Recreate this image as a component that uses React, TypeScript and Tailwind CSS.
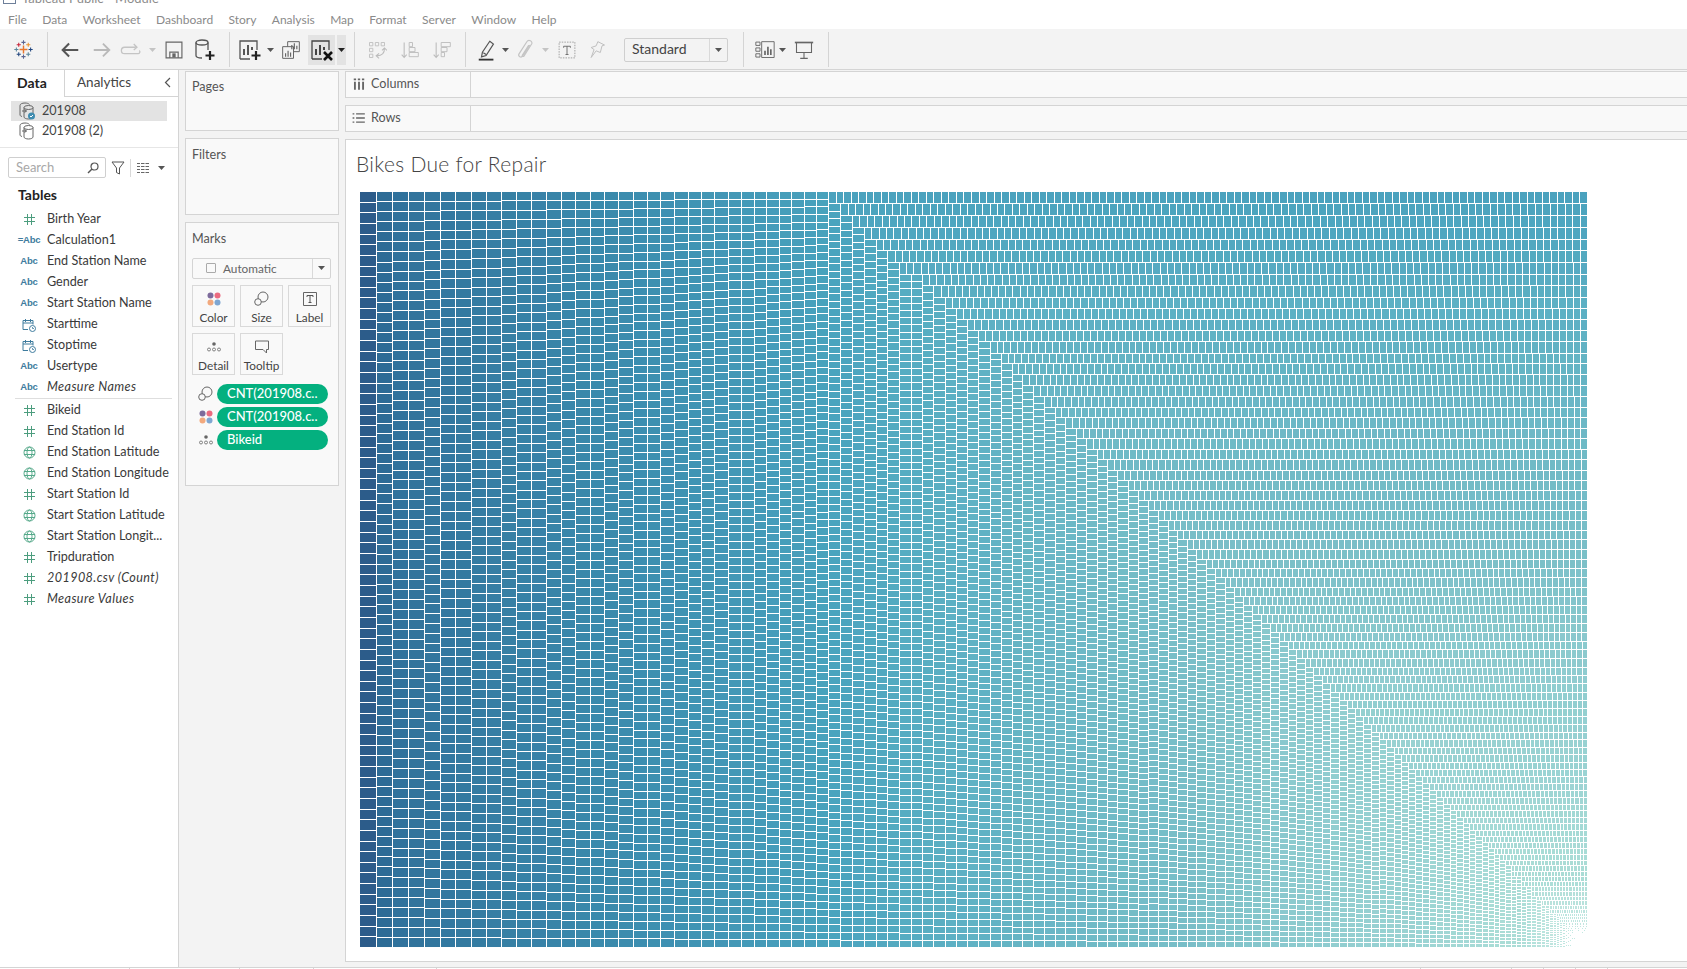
import type { ReactNode } from "react";

// hand drawn toolbar + field icons
const Svg = ({ s = 20, children }: { s?: number; children: ReactNode }) => (
  <svg width={s} height={s} viewBox="0 0 24 24" fill="none" aria-hidden>
    {children}
  </svg>
);

const Caret = ({ c = "#555" }: { c?: string }) => (
  <svg width="7" height="4" viewBox="0 0 7 4" aria-hidden>
    <path d="M0 0h7L3.5 4z" fill={c} />
  </svg>
);

const Logo = () => {
  const crosses: [number, number, number, string, number][] = [
    [12, 12, 5, "#e8762c", 1.8],
    [12, 3, 2.6, "#5b6591", 1.3],
    [12, 21, 2.6, "#5b6591", 1.3],
    [3, 12, 2.6, "#59879b", 1.3],
    [21, 12, 2.6, "#1f447e", 1.3],
    [6, 6, 2.6, "#c72035", 1.3],
    [18, 6, 2.6, "#eb912b", 1.3],
    [6, 18, 2.6, "#1f447e", 1.3],
    [18, 18, 2.6, "#5b879b", 1.3],
  ];
  return (
    <Svg s={19}>
      {crosses.map(([x, y, r, c, sw], i) => (
        <path key={i} d={`M${x - r} ${y}h${r * 2}M${x} ${y - r}v${r * 2}`} stroke={c} strokeWidth={sw} />
      ))}
    </Svg>
  );
};

const IconBack = ({ c = "#555" }: { c?: string }) => (
  <Svg s={22}>
    <path d="M21 12H4M11 5l-7 7 7 7" stroke={c} strokeWidth="2.2" />
  </Svg>
);
const IconFwd = () => (
  <Svg s={22}>
    <path d="M3 12h17M13 5l7 7-7 7" stroke="#b9b9b9" strokeWidth="2" />
  </Svg>
);
const IconRedo = () => (
  <Svg s={22}>
    <path d="M17 9H5a3 3 0 0 0 0 7h15a2 2 0 0 0 1-3.500M15 5.500 18.500 9 15 12" stroke="#c4c4c4" strokeWidth="1.4" />
  </Svg>
);
const IconSave = () => (
  <Svg s={20}>
    <path d="M2.500 2.500h19v19h-19zM7 21.500v-7h10v7" stroke="#666" strokeWidth="1.4" />
    <path d="M10 16h4v5h-4z" fill="#666" />
  </Svg>
);
const IconDb = () => (
  <Svg s={24}>
    <ellipse cx="9" cy="4.500" rx="6" ry="2.500" stroke="#555" strokeWidth="1.3" />
    <path d="M3 4.500v13c0 1.400 2.500 2.500 6 2.500M15 4.500V12" stroke="#555" strokeWidth="1.3" />
    <path d="M17 13v9M12.500 17.500h9" stroke="#222" strokeWidth="2.200" />
  </Svg>
);
const Bars = ({ c = "#555" }: { c?: string }) => (
  <>
    <path d="M2 21V3h17v9M2 21h10" stroke={c} strokeWidth="1.300" />
    <path d="M6 11v6M10 7v10M14 9v3" stroke={c} strokeWidth="2" />
  </>
);
const IconNewWs = () => (
  <Svg s={24}>
    <Bars />
    <path d="M18 13v9M13.500 17.500h9" stroke="#222" strokeWidth="2.200" />
  </Svg>
);
const IconDup = () => (
  <Svg s={20}>
    <path d="M8 8V2h14v12h-7M2 8h13v14H2z" stroke="#666" strokeWidth="1.200" />
    <path d="M5.500 20v-4M8.500 20v-7M11.500 20v-5M13 11V6M16 11V4M19 11V7" stroke="#666" strokeWidth="1.400" />
  </Svg>
);
const IconClear = () => (
  <Svg s={24}>
    <Bars c="#444" />
    <path d="M14 14l8 8M22 14l-8 8" stroke="#111" strokeWidth="2.600" />
  </Svg>
);
const IconSwap = () => (
  <Svg s={20}>
    <path d="M3 3h4v4H3zM10 3h4v4h-4zM17 3h4v4h-4zM3 10h4v4H3zM3 17h4v4H3z" stroke="#c0c0c0" strokeWidth="1.100" />
    <path d="M21 10c0 6-3 9-9 9M14.500 16 11 19l3.500 3M18 12.500l3-3 3 3" stroke="#bcbcbc" strokeWidth="1.300" />
  </Svg>
);
const IconSortAsc = () => (
  <Svg s={20}>
    <path d="M5 3v18M2 17.500 5 21l3-3.500" stroke="#bcbcbc" strokeWidth="1.300" />
    <path d="M11 3h4v5h-4zM11 9h7v5h-7zM11 15h11v5H11z" stroke="#bcbcbc" strokeWidth="1.100" />
  </Svg>
);
const IconSortDesc = () => (
  <Svg s={20}>
    <path d="M5 3v18M2 17.500 5 21l3-3.500" stroke="#bcbcbc" strokeWidth="1.300" />
    <path d="M11 3h11v5H11zM11 9h7v5h-7zM11 15h4v5h-4z" stroke="#bcbcbc" strokeWidth="1.100" />
  </Svg>
);
const IconHighlight = () => (
  <Svg s={22}>
    <path d="M15 2.500l4 3L11 18l-5 1.500L7 14.500z" stroke="#555" strokeWidth="1.300" />
    <path d="M8 15l3 2" stroke="#555" strokeWidth="1.300" />
    <path d="M3 22.500h16" stroke="#333" strokeWidth="2" />
  </Svg>
);
const IconClip = () => (
  <Svg s={22}>
    <path d="M16 6.500 8.500 18.500c-1.800 2.500-5.500.3-4-2.300L13 3c2-3 6.800-.5 5.200 2.500L10 18.500c-.8 1.200-2.500.3-1.800-1L15 7" stroke="#c4c4c4" strokeWidth="1.300" transform="translate(1 0)" />
  </Svg>
);
const IconTextBox = () => (
  <Svg s={18}>
    <path d="M1.500 1.500h21v21h-21z" stroke="#888" strokeWidth="1" strokeDasharray="2 1.500" />
    <path d="M7.500 9V7h9v2M12 7v11M10 18h4" stroke="#666" strokeWidth="1.200" />
  </Svg>
);
const IconPin = () => (
  <Svg s={20}>
    <path d="M13 2l8 4-3 1-2 8-5-2-6 8 3.500-9.500L5 9l6-2z" stroke="#c0c0c0" strokeWidth="1.200" />
  </Svg>
);
const IconShowMe = () => (
  <Svg s={20}>
    <path d="M1 2.500h5v4H1zM1 9.500h5v4H1zM1 16.500h5v4H1zM8 2h15v19H8z" stroke="#666" strokeWidth="1.100" />
    <path d="M12 18v-5M15.500 18V8M19 18v-7" stroke="#666" strokeWidth="2" />
  </Svg>
);
const IconPresent = () => (
  <Svg s={20}>
    <path d="M1 3h22" stroke="#666" strokeWidth="2" />
    <path d="M3 3v12h18V3M12 15v7M7.500 22h9" stroke="#666" strokeWidth="1.300" />
  </Svg>
);
const IconCols = () => (
  <Svg s={14}>
    <path d="M5 8v14M12 8v14M19 8v14" stroke="#666" strokeWidth="3.200" />
    <path d="M3 4h4M10 4h4M17 4h4" stroke="#666" strokeWidth="3" />
  </Svg>
);
const IconRows = () => (
  <Svg s={14}>
    <path d="M7 5h15M7 12h15M7 19h15" stroke="#666" strokeWidth="2.400" />
    <path d="M1 5h3M1 12h3M1 19h3" stroke="#666" strokeWidth="2.400" />
  </Svg>
);
const IconDs = ({ active }: { active?: boolean }) => (
  <svg width="16" height="18" viewBox="0 0 16 18" fill="none" aria-hidden>
    <path d="M3 14.500C1.500 14 1 13.500 1 13V3.500C1 2 3 1 6 1c2 0 3.500.5 4.500 1.500" stroke="#666" strokeWidth="1" />
    <ellipse cx="9.500" cy="5.500" rx="4.500" ry="2" stroke="#666" strokeWidth="1" />
    <path d="M5 5.500V15c0 1 2 2 4.500 2s4.500-1 4.500-2V5.500M3 9h4.500M5.500 7.500 7.500 9l-2 1.500" stroke="#666" strokeWidth="1" />
    {active && <circle cx="12.500" cy="14" r="3.500" fill="#3f8cb0" />}
    {active && <path d="M11 14l1 1 2-2" stroke="#fff" strokeWidth="1" />}
  </svg>
);
const IconSearch = () => (
  <svg width="12" height="12" viewBox="0 0 12 12" fill="none" aria-hidden>
    <circle cx="7.500" cy="4.500" r="3.500" stroke="#555" strokeWidth="1.200" />
    <path d="M5 7 1 11" stroke="#555" strokeWidth="1.500" />
  </svg>
);
const IconFilter = () => (
  <svg width="14" height="14" viewBox="0 0 14 14" fill="none" aria-hidden>
    <path d="M1 1h12L8.500 7v6l-3-1.500V7z" stroke="#555" strokeWidth="1" />
  </svg>
);
const IconList = () => (
  <svg width="12" height="10" viewBox="0 0 12 10" aria-hidden>
    <path d="M0 0h3v1H0zM4 0h3.500v1H4zM8.500 0H12v1H8.500zM0 3h3v1H0zM4 3h3.500v1H4zM8.500 3H12v1H8.500zM0 6h3v1H0zM4 6h3.500v1H4zM8.500 6H12v1H8.500zM0 9h3v1H0zM4 9h3.500v1H4zM8.500 9H12v1H8.500z" fill="#666" />
  </svg>
);
const IconHash = () => (
  <svg width="11" height="11" viewBox="0 0 11 11" fill="none" aria-hidden>
    <path d="M3.500 0v11M7.500 0v11M0 3.500h11M0 7.500h11" stroke="#4c9d7e" strokeWidth="1" />
  </svg>
);
const IconGlobe = () => (
  <svg width="13" height="13" viewBox="0 0 13 13" fill="none" aria-hidden>
    <circle cx="6.500" cy="6.500" r="5.500" stroke="#55a98a" strokeWidth="1" />
    <ellipse cx="6.500" cy="6.500" rx="2.500" ry="5.500" stroke="#55a98a" strokeWidth="1" />
    <path d="M1 4.500h11M1 8.500h11" stroke="#55a98a" strokeWidth="1" />
  </svg>
);
const IconCal = () => (
  <svg width="14" height="14" viewBox="0 0 14 14" fill="none" aria-hidden>
    <path d="M6 11.500H1V2.500h10v4M1 5h10M3.500 1v3M8.500 1v3" stroke="#3f7c9e" strokeWidth="1" />
    <circle cx="10.500" cy="10.500" r="3" stroke="#3f7c9e" strokeWidth="1" />
    <path d="M10.500 9v1.500H12" stroke="#3f7c9e" strokeWidth=".8" />
  </svg>
);
const AbcIcon = ({ calc }: { calc?: boolean }) => (
  <span className="font-['Liberation_Sans',sans-serif] text-[9.5px] font-bold tracking-[-0.2px] text-[#3f7c9e] whitespace-nowrap">
    {calc ? "=Abc" : "Abc"}
  </span>
);
const IconDots = () => (
  <svg width="14" height="14" viewBox="0 0 14 14" aria-hidden>
    <circle cx="3.500" cy="3.500" r="3" fill="#7d6b9c" />
    <circle cx="10.500" cy="3.500" r="3" fill="#ec6b80" />
    <circle cx="3.500" cy="10.500" r="3" fill="#f2a97e" />
    <circle cx="10.500" cy="10.500" r="3" fill="#7fa6d1" />
  </svg>
);
const IconSize = () => (
  <svg width="15" height="15" viewBox="0 0 15 15" fill="none" aria-hidden>
    <circle cx="9" cy="6" r="5" stroke="#666" strokeWidth="1" />
    <circle cx="4" cy="11" r="3.300" stroke="#666" strokeWidth="1" fill="#f9f9f9" />
  </svg>
);
const IconLabel = () => (
  <svg width="14" height="14" viewBox="0 0 14 14" fill="none" aria-hidden>
    <path d="M.5.500h13v13H.5z" stroke="#666" strokeWidth="1" />
    <path d="M4 5V3.500h6V5M7 3.500v7M5.500 10.500h3" stroke="#555" strokeWidth="1" />
  </svg>
);
const IconDetail = () => (
  <svg width="14" height="10" viewBox="0 0 14 10" fill="none" aria-hidden>
    <circle cx="7" cy="2" r="1.800" fill="#666" />
    <circle cx="2" cy="7.500" r="1.500" stroke="#666" strokeWidth=".8" />
    <circle cx="7" cy="7.500" r="1.500" stroke="#666" strokeWidth=".8" />
    <circle cx="12" cy="7.500" r="1.500" stroke="#666" strokeWidth=".8" />
  </svg>
);
const IconTooltip = () => (
  <svg width="14" height="14" viewBox="0 0 14 14" fill="none" aria-hidden>
    <path d="M.5 1h13v8.500h-2V13l-3.500-3.500H.5z" stroke="#666" strokeWidth="1" />
  </svg>
);

// treemap: strips of cells, alternating sides the way a squarified layout does
const STOPS: [number, string][] = [
  [1, "#2b5c8a"],
  [0.98, "#30729b"],
  [0.8, "#3b8bad"],
  [0.614, "#4aa3be"],
  [0.45, "#5bafc3"],
  [0.17, "#7abfc8"],
  [0.033, "#9ad3d3"],
  [0.005, "#abddd7"],
  [0, "#c4e8e2"],
];

const hexAt = (f: number) => {
  for (let i = 0; i < STOPS.length - 1; i++) {
    const [a, ca] = STOPS[i];
    const [b, cb] = STOPS[i + 1];
    if (f <= a && f >= b) {
      const t = (a - f) / (a - b);
      const mix = (o: number) => {
        const p = parseInt(ca.slice(o, o + 2), 16);
        const q = parseInt(cb.slice(o, o + 2), 16);
        return Math.round((p + (q - p) * t) / 2) * 2;
      };
      return `rgb(${mix(1)},${mix(3)},${mix(5)})`;
    }
  }
  return "#c4e8e2";
};

function buildTreemap(W: number, H: number) {
  const paths = new Map<string, string>();
  const add = (x: number, y: number, w: number, h: number, f: number) => {
    const x0 = Math.round(x);
    const y0 = Math.round(y);
    const cw = Math.round(x + w) - x0 - 1;
    const ch = Math.round(y + h) - y0 - 1;
    if (cw < 1 || ch < 1) return;
    const c = hexAt(f);
    paths.set(c, (paths.get(c) ?? "") + `M${x0} ${y0}h${cw}v${ch}h${-cw}z`);
  };
  let x = 0;
  let y = 0;
  let w = W;
  let h = H;
  const A0 = W * H;
  let guard = 0;
  while (w > 1 && h > 1 && guard++ < 3000) {
    const f = (w * h) / A0;
    const side = Math.sqrt(w * h);
    let v = f >= 0.614 ? 90 + (165 - 90) * ((f - 0.614) / 0.386) : 90 * Math.pow(f / 0.614, 0.35);
    if (f === 1) v = 180;
    if (side < 45) v *= side / 45;
    const t0 = Math.sqrt(1.6 * v);
    if (w >= h + (f > 0.5 ? 10 : 0)) {
      const n = Math.max(1, Math.round((h * t0) / v));
      const t = Math.min(w, (n * v) / h);
      for (let i = 0; i < n; i++) add(x, y + (i * h) / n, t, h / n, f);
      x += t;
      w -= t;
    } else {
      const n = Math.max(1, Math.round((w * t0) / v));
      const t = Math.min(h, (n * v) / w);
      for (let i = 0; i < n; i++) add(x + (i * w) / n, y, w / n, t, f);
      y += t;
      h -= t;
    }
  }
  return [...paths.entries()];
}

const TREEMAP = buildTreemap(1228, 756);

type Kind = "abc" | "calc" | "hash" | "globe" | "cal";
const DIMS: [Kind, string, boolean?][] = [
  ["hash", "Birth Year"],
  ["calc", "Calculation1"],
  ["abc", "End Station Name"],
  ["abc", "Gender"],
  ["abc", "Start Station Name"],
  ["cal", "Starttime"],
  ["cal", "Stoptime"],
  ["abc", "Usertype"],
  ["abc", "Measure Names", true],
];
const MEASURES: [Kind, string, boolean?][] = [
  ["hash", "Bikeid"],
  ["hash", "End Station Id"],
  ["globe", "End Station Latitude"],
  ["globe", "End Station Longitude"],
  ["hash", "Start Station Id"],
  ["globe", "Start Station Latitude"],
  ["globe", "Start Station Longit..."],
  ["hash", "Tripduration"],
  ["hash", "201908.csv (Count)", true],
  ["hash", "Measure Values", true],
];

const FieldRow = ({ kind, name, italic }: { kind: Kind; name: string; italic?: boolean }) => (
  <div className="flex h-[21px] items-center">
    <span className="flex w-[47px] shrink-0 items-center justify-center pl-[11px]">
      {kind === "abc" && <AbcIcon />}
      {kind === "calc" && <AbcIcon calc />}
      {kind === "hash" && <IconHash />}
      {kind === "globe" && <IconGlobe />}
      {kind === "cal" && <IconCal />}
    </span>
    <span className={`whitespace-nowrap text-[12.6px] text-[#3a3a3a] ${italic ? "italic tracking-[0.42px]" : ""}`}>{name}</span>
  </div>
);

const MarkBtn = ({ icon, label }: { icon: ReactNode; label: string }) => (
  <div className="flex h-[42px] w-[43px] flex-col items-center border border-[#d9d9d9] pt-[4px]">
    <span className="flex h-[18px] items-center">{icon}</span>
    <span className="mt-[3px] text-[11.8px] leading-[14px] text-[#444]">{label}</span>
  </div>
);

const Pill = ({ icon, label }: { icon: ReactNode; label: string }) => (
  <div className="flex h-[20px] items-center">
    <span className="flex w-[25px] justify-center pl-[2px]">{icon}</span>
    <span className="flex h-[20px] w-[111px] items-center rounded-full bg-[#04b07f] pl-[10px] text-[13px] font-medium text-white">
      {label}
    </span>
  </div>
);

const Sep = () => <span className="h-[35px] w-px shrink-0 bg-[#d4d4d4]" />;
const Slot = ({ className, children }: { className: string; children?: ReactNode }) => (
  <span className={`flex shrink-0 items-center justify-center ${className}`}>{children}</span>
);

const MENU = ["File", "Data", "Worksheet", "Dashboard", "Story", "Analysis", "Map", "Format", "Server", "Window", "Help"];

export default function App() {
  return (
    <div className="flex h-[969px] w-[1687px] flex-col overflow-hidden bg-white font-['Lato',sans-serif]">
      {/* title bar, cut off by the top of the screenshot */}
      <div className="flex h-[10px] items-start overflow-hidden pl-[3px]">
        <span className="h-[4px] w-[13px] border-x border-b border-[#6d7f9a]" />
        <span className="ml-[6px] -mt-[8px] text-[13px] leading-[13px] text-[#8d8d8d]">Tableau Public - Module</span>
      </div>

      <div className="flex h-[19px] items-center gap-[15.4px] pl-[8px] text-[12px] text-[#8a8a8a]">
        {MENU.map((m) => (
          <span key={m}>{m}</span>
        ))}
      </div>

      <div className="flex h-[41px] items-center border-b border-[#d4d4d4] bg-[#f3f3f3] pl-[10px] pt-px">
        <Slot className="w-[27px]"><Logo /></Slot>
        <span className="ml-[10px] flex"><Sep /></span>
        <Slot className="ml-[6px] w-[32px]"><IconBack /></Slot>
        <Slot className="w-[32px]"><IconFwd /></Slot>
        <Slot className="w-[26px]"><IconRedo /></Slot>
        <Slot className="w-[16px]"><Caret c="#c4c4c4" /></Slot>
        <Slot className="w-[28px]"><IconSave /></Slot>
        <Slot className="w-[34px]"><IconDb /></Slot>
        <span className="ml-[7px] flex"><Sep /></span>
        <Slot className="ml-[4px] w-[32px]"><IconNewWs /></Slot>
        <Slot className="w-[8px]"><Caret /></Slot>
        <Slot className="w-[34px]"><IconDup /></Slot>
        <Slot className="h-[30px] w-[27px] bg-[#e3e3e3]"><IconClear /></Slot>
        <Slot className="ml-[2px] h-[30px] w-[9px] bg-[#e3e3e3]"><Caret c="#222" /></Slot>
        <span className="ml-[8px] flex"><Sep /></span>
        <Slot className="ml-[5px] w-[34px]"><IconSwap /></Slot>
        <Slot className="w-[32px]"><IconSortAsc /></Slot>
        <Slot className="w-[32px]"><IconSortDesc /></Slot>
        <span className="ml-[7px] flex"><Sep /></span>
        <Slot className="ml-[6px] w-[29px]"><IconHighlight /></Slot>
        <Slot className="w-[8px]"><Caret /></Slot>
        <Slot className="w-[32px]"><IconClip /></Slot>
        <Slot className="w-[8px]"><Caret c="#c4c4c4" /></Slot>
        <Slot className="ml-[2px] w-[32px]"><IconTextBox /></Slot>
        <Slot className="w-[28px]"><IconPin /></Slot>
        <div className="ml-[13px] flex h-[24px] w-[104px] shrink-0 items-center rounded-[2px] border border-[#cfcfcf]">
          <span className="flex-1 pb-[2px] pl-[7px] text-[14px] text-[#444]">Standard</span>
          <span className="flex h-full w-[18px] items-center justify-center border-l border-[#d9d9d9]"><Caret /></span>
        </div>
        <span className="ml-[15px] flex"><Sep /></span>
        <Slot className="ml-[7px] w-[28px]"><IconShowMe /></Slot>
        <Slot className="w-[7px]"><Caret /></Slot>
        <Slot className="w-[36px]"><IconPresent /></Slot>
        <span className="ml-[6px] flex"><Sep /></span>
      </div>

      <div className="flex min-h-0 flex-1">
        {/* data pane */}
        <aside className="flex w-[179px] shrink-0 flex-col border-r border-[#d4d4d4] bg-white">
          <div className="flex h-[27px] items-stretch">
            <div className="flex w-[65px] items-center justify-center border-r border-[#d4d4d4] pb-[2px] text-[14px] font-bold text-[#222]">Data</div>
            <div className="flex flex-1 items-center border-b border-[#d4d4d4] pb-px pl-[12px] text-[13.5px] text-[#444]">
              <span className="flex-1">Analytics</span>
              <svg className="mr-[7px]" width="7" height="11" viewBox="0 0 7 11" fill="none" aria-hidden>
                <path d="M6 1 1.500 5.500 6 10" stroke="#555" strokeWidth="1.200" />
              </svg>
            </div>
          </div>
          <div className="mr-[11px] mt-[4px] flex h-[20px] w-[156px] items-center self-end bg-[#e3e3e3]">
            <span className="flex w-[31px] justify-center pl-[1px]"><IconDs active /></span>
            <span className="text-[12.6px] text-[#444]">201908</span>
          </div>
          <div className="ml-[11px] flex h-[20px] items-center">
            <span className="flex w-[31px] justify-center pl-[1px]"><IconDs /></span>
            <span className="text-[12.6px] text-[#444]">201908 (2)</span>
          </div>
          <div className="mt-[6px] h-px bg-[#e6e6e6]" />
          <div className="mt-[9px] flex items-center pl-[8px]">
            <div className="flex h-[21px] w-[98px] items-center justify-between rounded-[2px] border border-[#cfcfcf] pl-[7px] pr-[6px]">
              <span className="text-[13px] text-[#a8a8a8]">Search</span>
              <IconSearch />
            </div>
            <span className="ml-[5px] flex"><IconFilter /></span>
            <span className="ml-[5px] h-[18px] w-px bg-[#d9d9d9]" />
            <span className="ml-[6px] flex"><IconList /></span>
            <span className="ml-[9px] flex"><Caret /></span>
          </div>
          <div className="flex h-[31px] items-center pl-[18px] pt-px text-[14px] font-bold text-[#222]">Tables</div>
          {DIMS.map(([k, n, i]) => (
            <FieldRow key={n} kind={k} name={n} italic={i} />
          ))}
          <div className="ml-[15px] mr-[6px] h-px bg-[#dedede]" />
          <div className="h-px" />
          {MEASURES.map(([k, n, i]) => (
            <FieldRow key={n} kind={k} name={n} italic={i} />
          ))}
        </aside>

        {/* pages / filters / marks */}
        <div className="flex w-[166px] shrink-0 flex-col gap-[7px] bg-[#f3f3f3] pl-[6px] pr-[6px] pt-px">
          <div className="h-[60px] border border-[#d4d4d4] bg-[#f9f9f9] pl-[6px] pt-[5.5px] text-[12.6px] text-[#555]">Pages</div>
          <div className="h-[77px] border border-[#d4d4d4] bg-[#f9f9f9] pl-[6px] pt-[6.5px] text-[12.6px] text-[#555]">Filters</div>
          <div className="h-[264px] border border-[#d4d4d4] bg-[#f9f9f9] pl-[6px] pr-[7px] pt-[7px]">
            <div className="text-[12.6px] text-[#555]">Marks</div>
            <div className="mt-[9px] flex h-[21px] items-center rounded-[2px] border border-[#d4d4d4]">
              <span className="ml-[13px] h-[10px] w-[10px] rounded-[1px] border border-[#aaa]" />
              <span className="ml-[7px] flex-1 text-[11.8px] text-[#666]">Automatic</span>
              <span className="flex h-full w-[18px] items-center justify-center border-l border-[#d9d9d9]"><Caret /></span>
            </div>
            <div className="mt-[6px] flex gap-[5px]">
              <MarkBtn icon={<IconDots />} label="Color" />
              <MarkBtn icon={<IconSize />} label="Size" />
              <MarkBtn icon={<IconLabel />} label="Label" />
            </div>
            <div className="mt-[6px] flex gap-[5px]">
              <MarkBtn icon={<IconDetail />} label="Detail" />
              <MarkBtn icon={<IconTooltip />} label="Tooltip" />
            </div>
            <div className="mt-[9px] flex flex-col gap-[3px]">
              <Pill icon={<IconSize />} label="CNT(201908.c.." />
              <Pill icon={<IconDots />} label="CNT(201908.c.." />
              <Pill icon={<IconDetail />} label="Bikeid" />
            </div>
          </div>
        </div>

        {/* shelves + view */}
        <div className="flex min-w-0 flex-1 flex-col gap-[7px] bg-[#f3f3f3] pt-px">
          <div className="flex h-[27px] border-y border-l border-[#d4d4d4] bg-[#f9f9f9]">
            <div className="flex w-[125px] items-center gap-[5px] border-r border-[#d4d4d4] pb-px pl-[6px] text-[12.6px] text-[#555]">
              <IconCols />
              Columns
            </div>
          </div>
          <div className="flex h-[27px] border-y border-l border-[#d4d4d4] bg-[#f9f9f9]">
            <div className="flex w-[125px] items-center gap-[5px] border-r border-[#d4d4d4] pb-px pl-[6px] text-[12.6px] text-[#555]">
              <IconRows />
              Rows
            </div>
          </div>
          <div className="h-[823px] border-y border-l border-[#d4d4d4] bg-white pl-[14px]">
            <h1 className="pt-[10px] text-[21px] font-light leading-[28px] tracking-[0.3px] text-[#444] [text-indent:-4px]">Bikes Due for Repair</h1>
            <svg className="mt-[14px] block" width="1228" height="756" viewBox="0 0 1228 756" shapeRendering="crispEdges" aria-label="Treemap of bikes">
              {TREEMAP.map(([c, d]) => (
                <path key={c} d={d} fill={c} />
              ))}
            </svg>
          </div>
        </div>
      </div>

      {/* sheet tab strip, only its top edge is on screen */}
      <div className="flex h-[2px] shrink-0 border-t border-[#d4d4d4] bg-white">
        <span className="w-[130px] border-r border-[#d4d4d4]" />
        <span className="w-[110px] border-r border-[#d4d4d4]" />
        <span className="w-[74px] border-r border-[#d4d4d4]" />
        <span className="w-[123px] border-r border-[#d4d4d4]" />
        <span className="w-[984px] border-r border-[#d4d4d4]" />
        <span className="w-[91px] border-r border-[#d4d4d4]" />
        <span className="w-[32px] border-r border-[#d4d4d4]" />
        <span className="w-[32px] border-r border-[#d4d4d4]" />
        <span className="w-[32px] border-r border-[#d4d4d4]" />
      </div>
    </div>
  );
}
